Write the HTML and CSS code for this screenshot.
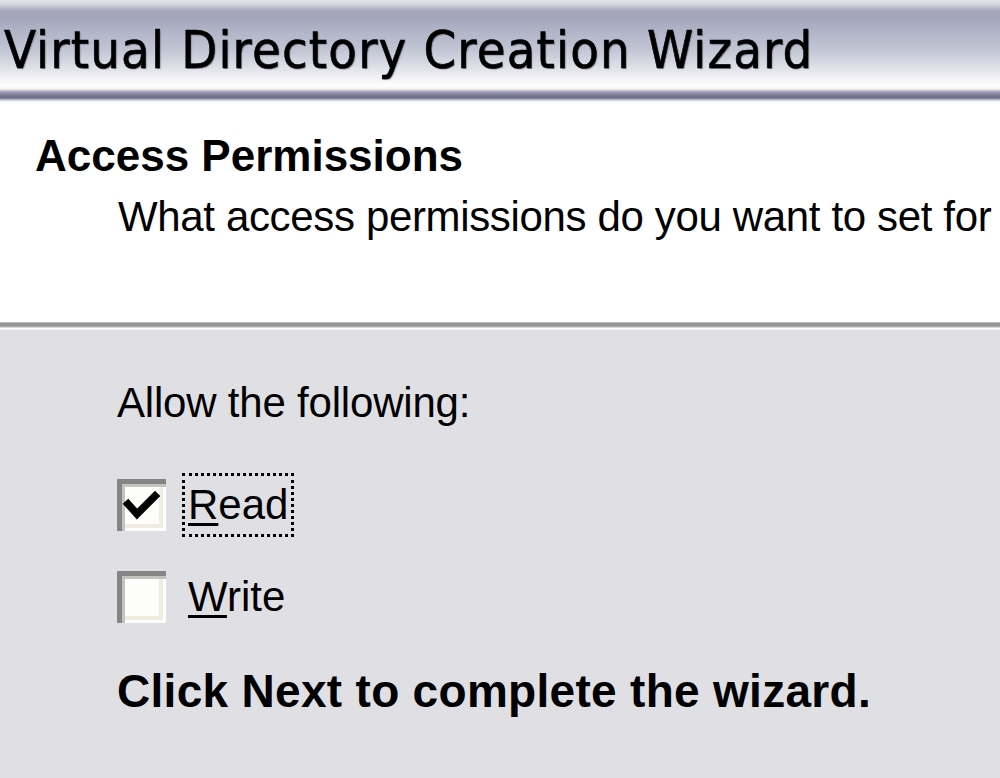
FILE: index.html
```html
<!DOCTYPE html>
<html>
<head>
<meta charset="utf-8">
<link rel="stylesheet" href="styles.css">
</head>
<body>
<div class="window">
  <div class="titlebar"><span class="title">Virtual Directory Creation Wizard</span></div>
  <div class="header">
    <div class="h-title">Access Permissions</div>
    <div class="h-sub">What access permissions do you want to set for</div>
  </div>
  <div class="sep"></div>
  <div class="content">
    <div class="allow">Allow the following:</div>
    <div class="row row-read">
      <span class="cb">
        <svg class="tick" width="48" height="52" viewBox="0 0 48 52"><polyline points="11,25 20,35 38,17" fill="none" stroke="#000" stroke-width="7.5" stroke-linecap="square" stroke-linejoin="miter"/></svg>
      </span>
      <span class="label focus"><span class="mn">R</span>ead</span>
    </div>
    <div class="row row-write">
      <span class="cb"></span>
      <span class="label"><span class="mn">W</span>rite</span>
    </div>
    <div class="finish">Click Next to complete the wizard.</div>
  </div>
</div>
</body>
</html>
```
FILE: styles.css
```css
html, body {
  margin: 0;
  padding: 0;
  width: 1000px;
  height: 778px;
  overflow: hidden;
  background: #e0dfe4;
}
.window {
  width: 1000px;
  height: 778px;
  display: flex;
  flex-direction: column;
  font-family: "Liberation Sans", Arial, sans-serif;
  color: #000;
}
.titlebar {
  height: 103px;
  flex: none;
  box-sizing: border-box;
  padding: 20px 0 0 4px;
  background: linear-gradient(to bottom,
    #e2e2ea 0px, #d6d6e0 4px, #a6a6bc 11px, #a4a6bc 18px,
    #b2b4c8 32px, #c2c6d4 50px, #dcdee6 66px, #f2f2f6 78px,
    #ffffff 86px, #f6f2ee 89px, #9a9ab2 92px, #74748f 96px,
    #6e6e8a 98px, #c8c8d6 100px, #ffffff 102px);
}
.title {
  font-family: "DejaVu Sans Condensed", "DejaVu Sans", sans-serif;
  font-size: 52px;
  line-height: 60px;
  letter-spacing: 1.2px;
  display: block;
  white-space: nowrap;
  -webkit-text-stroke: 0.6px #000;
  text-shadow: 1px 1px 1px rgba(40, 40, 60, 0.45);
}
.header {
  height: 219px;
  flex: none;
  box-sizing: border-box;
  background: #fff;
  padding: 28px 0 0 35px;
  white-space: nowrap;
  overflow: hidden;
}
.h-title {
  font-weight: bold;
  font-size: 44px;
  line-height: 50px;
}
.h-sub {
  font-size: 42px;
  line-height: 50px;
  letter-spacing: -0.35px;
  margin: 11px 0 0 83px;
}
.sep {
  height: 8px;
  flex: none;
  background: linear-gradient(to bottom,
    #d4d4d4 0px, #9c9c9c 1px, #8e8e8e 3px, #b4b4b4 5px,
    #ffffff 6px, #ffffff 7px, #ececf0 8px);
}
.content {
  flex: 1;
  padding: 48px 0 0 117px;
  background: #e0dfe4;
}
.allow {
  font-size: 42px;
  line-height: 50px;
  letter-spacing: -0.2px;
}
.row {
  display: flex;
  align-items: center;
  height: 64px;
}
.row-read { margin-top: 45px; }
.row-write { margin-top: 28px; }
.cb {
  width: 49px;
  height: 52px;
  flex: none;
  position: relative;
  background: #fdfdfb;
  box-shadow:
    inset 5px 5px 0 #858585,
    inset 8px 8px 0 #c4c4bc,
    inset -3px -3px 0 #ffffff,
    inset -7px -7px 0 #efece0;
}
.tick {
  position: absolute;
  left: 0;
  top: 0;
}
.label {
  font-size: 42px;
  line-height: 50px;
  margin-left: 16px;
  padding: 4px 3px 4px 3px;
  border: 3px dotted transparent;
}
.label.focus {
  border-color: #000;
}
.mn {
  text-decoration: underline;
  text-decoration-thickness: 3px;
  text-underline-offset: 4px;
}
.finish {
  font-weight: bold;
  font-size: 46px;
  line-height: 52px;
  letter-spacing: 0.3px;
  margin-top: 36px;
  white-space: nowrap;
}
```
